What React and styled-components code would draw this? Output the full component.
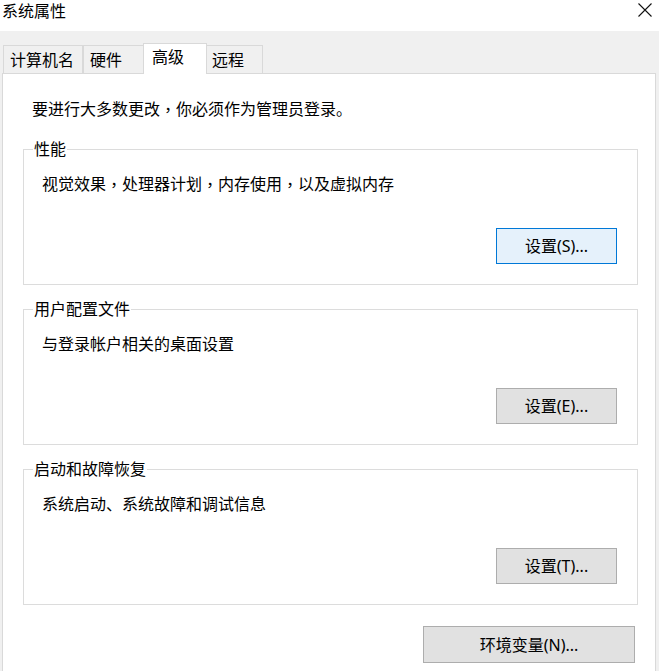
import React from "react";
import styled, { createGlobalStyle } from "styled-components";

const Global = createGlobalStyle`
  html, body {
    margin: 0;
    padding: 0;
    overflow: hidden;
    background: #f0f0f0;
  }
  body {
    font-family: "Noto Sans", "Noto Sans CJK SC", sans-serif;
    font-size: 16px;
    color: #000;
  }
  * { box-sizing: border-box; }
`;

const Window = styled.div`
  width: 659px;
  height: 671px;
  background: #f0f0f0;
  overflow: hidden;
`;

const TitleBar = styled.div`
  height: 31px;
  background: #fff;
  display: flex;
  justify-content: space-between;
  align-items: flex-start;
  padding: 0 7px 0 2px;
`;

const Title = styled.div`
  font-size: 16px;
  line-height: 22px;
`;

const CloseIcon = styled.svg`
  margin-top: 3px;
  display: block;
`;

const Body = styled.div`
  padding-top: 12px;
`;

const TabStrip = styled.div`
  display: flex;
  align-items: flex-end;
  padding-left: 3px;
`;

const Tab = styled.div`
  position: relative;
  width: ${(p) => p.$w}px;
  height: ${(p) => (p.$active ? 31 : 28)}px;
  margin: ${(p) => (p.$active ? "0 -2px -1px -2px" : "0")};
  padding: ${(p) => (p.$active ? "2px 0 0 8px" : "3px 0 0 6px")};
  background: ${(p) => (p.$active ? "#fff" : "#f0f0f0")};
  border: 1px solid #d9d9d9;
  border-bottom: none;
  z-index: ${(p) => (p.$active ? 1 : 0)};
  font-size: 16px;
  line-height: 22px;
  white-space: nowrap;
`;

const Panel = styled.div`
  margin-left: 2px;
  width: 654px;
  background: #fff;
  border: 1px solid #d9d9d9;
  padding: 24px 17px 20px 20px;
`;

const Notice = styled.div`
  height: 22px;
  line-height: 22px;
  padding-left: 9px;
  margin-bottom: 19px;
  white-space: nowrap;
`;

const Punct = styled.span`
  font-family: "Noto Sans CJK TC", "Noto Sans CJK SC", sans-serif;
  vertical-align: top;
`;

const Groups = styled.div`
  display: flex;
  flex-direction: column;
  gap: 14px;
`;

const Group = styled.fieldset`
  margin: 0;
  padding: 0;
  min-width: 0;
  border: 1px solid #dcdcdc;
`;

const Legend = styled.legend`
  margin-left: 9px;
  padding: 0 1px;
  font-size: 16px;
  line-height: 20px;
`;

const GroupBody = styled.div`
  padding: 14px 20px 20px 18px;
  display: flex;
  flex-direction: column;
`;

const Desc = styled.div`
  height: 22px;
  line-height: 22px;
  white-space: nowrap;
`;

const ButtonRow = styled.div`
  display: flex;
  justify-content: flex-end;
  margin-top: ${(p) => p.$mt || 0}px;
  padding-right: ${(p) => p.$pr || 0}px;
`;

const Button = styled.button`
  width: ${(p) => p.$w}px;
  height: ${(p) => p.$h || 36}px;
  border: 1px solid ${(p) => (p.$focused ? "#0078d7" : "#adadad")};
  background: ${(p) => (p.$focused ? "#e5f1fb" : "#e1e1e1")};
  font-family: "Noto Sans", "Noto Sans CJK SC", sans-serif;
  font-size: 16px;
  line-height: 20px;
  color: #000;
  padding: 0;
  display: flex;
  align-items: center;
  justify-content: center;
`;

function withCommas(text) {
  const parts = text.split("，");
  return parts.map((part, i) => (
    <React.Fragment key={i}>
      {part}
      {i < parts.length - 1 && <Punct>，</Punct>}
    </React.Fragment>
  ));
}

const groups = [
  { title: "性能", desc: "视觉效果，处理器计划，内存使用，以及虚拟内存", btn: "设置(S)...", focused: true },
  { title: "用户配置文件", desc: "与登录帐户相关的桌面设置", btn: "设置(E)..." },
  { title: "启动和故障恢复", desc: "系统启动、系统故障和调试信息", btn: "设置(T)..." },
];

const tabs = [
  { label: "计算机名", w: 80 },
  { label: "硬件", w: 62 },
  { label: "高级", w: 64, active: true },
  { label: "远程", w: 58 },
];

export default function App() {
  return (
    <>
      <Global />
      <Window>
        <TitleBar>
          <Title>系统属性</Title>
          <CloseIcon width="14" height="14" viewBox="0 0 14 14">
            <path d="M0.5 0.5 L13.5 13.5 M13.5 0.5 L0.5 13.5" stroke="#111" strokeWidth="1.1" fill="none" />
          </CloseIcon>
        </TitleBar>
        <Body>
          <TabStrip>
            {tabs.map((t) => (
              <Tab key={t.label} $w={t.w} $active={t.active}>
                {t.label}
              </Tab>
            ))}
          </TabStrip>
          <Panel>
            <Notice>{withCommas("要进行大多数更改，你必须作为管理员登录。")}</Notice>
            <Groups>
              {groups.map((g) => (
                <Group key={g.title}>
                  <Legend>{g.title}</Legend>
                  <GroupBody>
                    <Desc>{withCommas(g.desc)}</Desc>
                    <ButtonRow $mt={33}>
                      <Button $w={121} $focused={g.focused}>{g.btn}</Button>
                    </ButtonRow>
                  </GroupBody>
                </Group>
              ))}
            </Groups>
            <ButtonRow $mt={21} $pr={3}>
              <Button $w={212} $h={37}>环境变量(N)...</Button>
            </ButtonRow>
          </Panel>
        </Body>
      </Window>
    </>
  );
}
